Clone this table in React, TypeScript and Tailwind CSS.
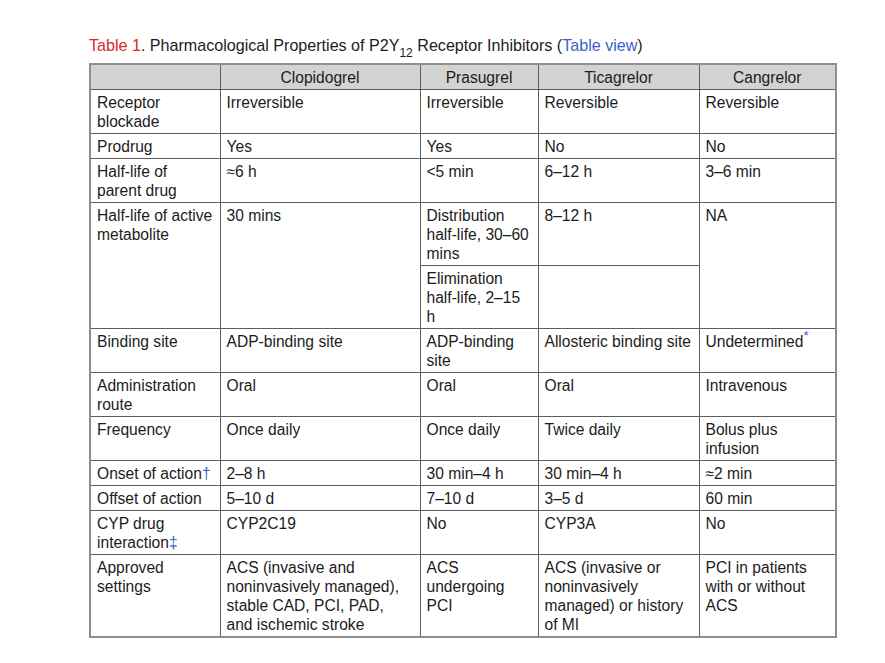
const cell = "border border-[#5c5c5c] px-[6px] pt-[3px] pb-[2px] align-top";

function Dagger({ c }: { c: string }) {
  return <span className="text-[#3a5fc8]">{c}</span>;
}

export default function App() {
  return (
    <div className="min-h-screen bg-white pl-[89px] pt-[35px] font-['Liberation_Sans',Arial,sans-serif] text-[#1c1c1c]">
      <h1 className="text-[16.1px] leading-[20px] font-normal">
        <span className="text-[#d8282e]">Table 1</span>. Pharmacological Properties of P2Y
        <sub className="text-[12px] leading-none align-[-3px]">12</sub> Receptor Inhibitors (
        <span className="text-[#3a5fc8]">Table view</span>)
      </h1>

      <table className="mt-[7px] w-[746px] table-fixed border-collapse border-2 border-[#8e8e8e] text-[15.6px] leading-[19px]">
        <colgroup>
          <col className="w-[130px]" />
          <col className="w-[200px]" />
          <col className="w-[118px]" />
          <col className="w-[161px]" />
          <col className="w-[137px]" />
        </colgroup>
        <thead>
          <tr className="bg-[#d3d3d3]">
            <th className={`${cell} font-normal`}></th>
            <th className={`${cell} font-normal text-center`}>Clopidogrel</th>
            <th className={`${cell} font-normal text-center`}>Prasugrel</th>
            <th className={`${cell} font-normal text-center`}>Ticagrelor</th>
            <th className={`${cell} font-normal text-center`}>Cangrelor</th>
          </tr>
        </thead>
        <tbody>
          <tr>
            <td className={cell}>Receptor blockade</td>
            <td className={cell}>Irreversible</td>
            <td className={cell}>Irreversible</td>
            <td className={cell}>Reversible</td>
            <td className={cell}>Reversible</td>
          </tr>
          <tr>
            <td className={cell}>Prodrug</td>
            <td className={cell}>Yes</td>
            <td className={cell}>Yes</td>
            <td className={cell}>No</td>
            <td className={cell}>No</td>
          </tr>
          <tr>
            <td className={cell}>Half-life of parent drug</td>
            <td className={cell}>≈6 h</td>
            <td className={cell}>&lt;5 min</td>
            <td className={cell}>6–12 h</td>
            <td className={cell}>3–6 min</td>
          </tr>
          <tr>
            <td className={cell} rowSpan={2}>Half-life of active metabolite</td>
            <td className={cell} rowSpan={2}>30 mins</td>
            <td className={cell}>Distribution half-life, 30–60 mins</td>
            <td className={cell}>8–12 h</td>
            <td className={cell} rowSpan={2}>NA</td>
          </tr>
          <tr>
            <td className={cell}>Elimination half-life, 2–15 h</td>
            <td className={cell}></td>
          </tr>
          <tr>
            <td className={cell}>Binding site</td>
            <td className={cell}>ADP-binding site</td>
            <td className={cell}>ADP-binding site</td>
            <td className={cell}>Allosteric binding site</td>
            <td className={cell}>
              Undetermined
              <sup className="text-[13px] leading-none text-[#3a5fc8] align-[1px]">*</sup>
            </td>
          </tr>
          <tr>
            <td className={cell}>Administration route</td>
            <td className={cell}>Oral</td>
            <td className={cell}>Oral</td>
            <td className={cell}>Oral</td>
            <td className={cell}>Intravenous</td>
          </tr>
          <tr>
            <td className={cell}>Frequency</td>
            <td className={cell}>Once daily</td>
            <td className={cell}>Once daily</td>
            <td className={cell}>Twice daily</td>
            <td className={cell}>Bolus plus infusion</td>
          </tr>
          <tr>
            <td className={cell}>
              Onset of action<Dagger c="†" />
            </td>
            <td className={cell}>2–8 h</td>
            <td className={cell}>30 min–4 h</td>
            <td className={cell}>30 min–4 h</td>
            <td className={cell}>≈2 min</td>
          </tr>
          <tr>
            <td className={cell}>Offset of action</td>
            <td className={cell}>5–10 d</td>
            <td className={cell}>7–10 d</td>
            <td className={cell}>3–5 d</td>
            <td className={cell}>60 min</td>
          </tr>
          <tr>
            <td className={cell}>
              CYP drug interaction<Dagger c="‡" />
            </td>
            <td className={cell}>CYP2C19</td>
            <td className={cell}>No</td>
            <td className={cell}>CYP3A</td>
            <td className={cell}>No</td>
          </tr>
          <tr>
            <td className={cell}>Approved settings</td>
            <td className={cell}>
              ACS (invasive and noninvasively managed), stable CAD, PCI, PAD, and ischemic stroke
            </td>
            <td className={cell}>ACS undergoing PCI</td>
            <td className={cell}>ACS (invasive or noninvasively managed) or history of MI</td>
            <td className={cell}>PCI in patients with or without ACS</td>
          </tr>
        </tbody>
      </table>
    </div>
  );
}
